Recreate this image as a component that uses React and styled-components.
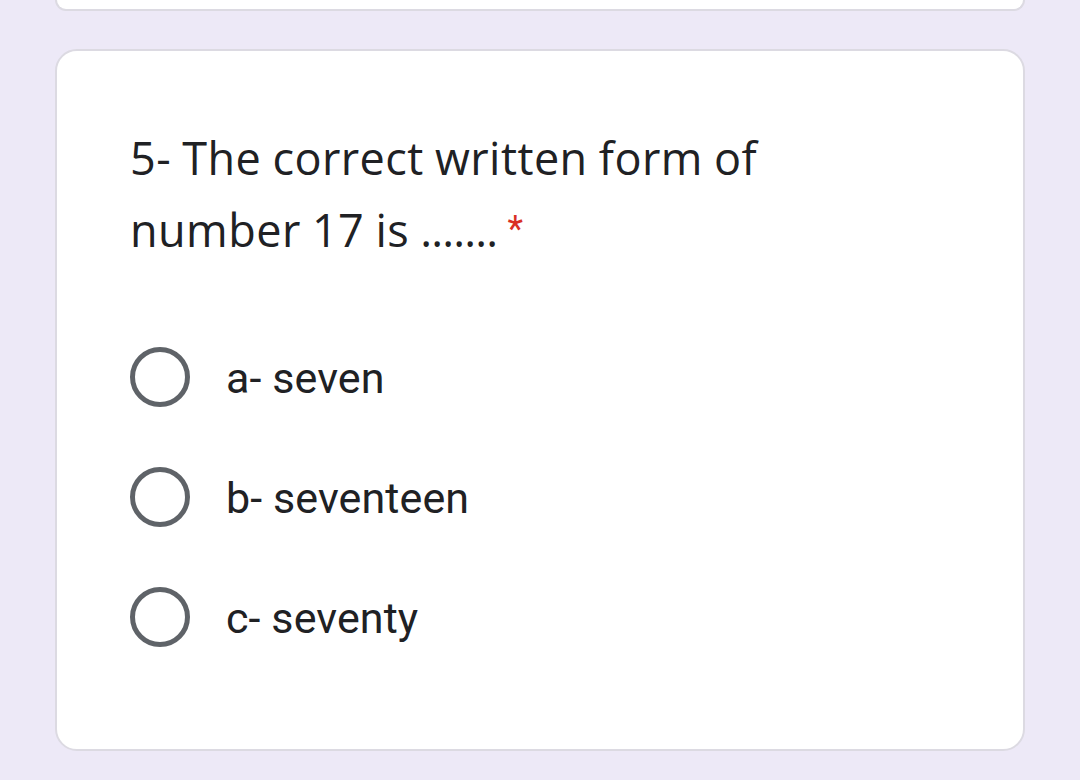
import React from "react";
import styled, { createGlobalStyle } from "styled-components";

const Global = createGlobalStyle`
  html, body { margin: 0; padding: 0; background: #ede9f7; }
  body { font-family: Roboto, "Noto Sans", Arial, sans-serif; }
`;

const Page = styled.div`
  width: 1080px;
  height: 780px;
  background: #ede9f7;
  display: flex;
  flex-direction: column;
  align-items: center;
  gap: 38px;
  overflow: hidden;
`;

const PrevCard = styled.div`
  box-sizing: border-box;
  width: 970px;
  height: 11px;
  background: #ffffff;
  border: 2px solid #dcdae2;
  border-top: none;
  border-radius: 0 0 22px 22px;
`;

const Card = styled.div`
  box-sizing: border-box;
  width: 970px;
  background: #ffffff;
  border: 2px solid #dcdae2;
  border-radius: 22px;
  padding: 71px 73px 72px 73px;
  display: flex;
  flex-direction: column;
`;

const Question = styled.div`
  font-family: "Open Sans", Roboto, sans-serif;
  font-size: 45px;
  line-height: 72px;
  letter-spacing: 0.45px;
  word-spacing: -1px;
  color: #202124;
  max-width: 700px;
  margin-bottom: 46px;
`;

const Dots = styled.span`
  letter-spacing: -0.8px;
`;

const Required = styled.span`
  color: #d93025;
  font-family: Roboto, sans-serif;
  font-size: 36px;
  margin-left: 10px;
  position: relative;
  top: -6px;
`;

const Options = styled.div`
  display: flex;
  flex-direction: column;
`;

const OptionRow = styled.label`
  height: 120px;
  display: flex;
  align-items: center;
  gap: 36px;
`;

const Radio = styled.span`
  box-sizing: border-box;
  width: 60px;
  height: 60px;
  border-radius: 50%;
  border: 5.5px solid #5f6368;
  flex: none;
`;

const OptionText = styled.span`
  font-size: 43px;
  color: #202124;
  letter-spacing: 0.1px;
  position: relative;
  top: 1px;
`;

const options = ["a- seven", "b- seventeen", "c- seventy"];

export default function App() {
  return (
    <>
      <Global />
      <Page>
        <PrevCard />
        <Card>
          <Question>
            5- The correct written form of number 17 is <Dots>.......</Dots>
            <Required>*</Required>
          </Question>
          <Options>
            {options.map((o) => (
              <OptionRow key={o}>
                <Radio />
                <OptionText>{o}</OptionText>
              </OptionRow>
            ))}
          </Options>
        </Card>
      </Page>
    </>
  );
}
